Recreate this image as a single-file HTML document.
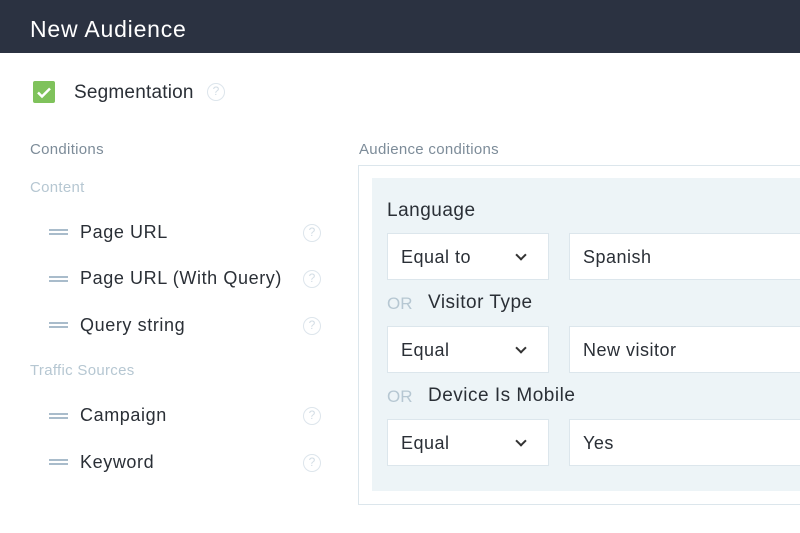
<!DOCTYPE html>
<html><head><style>
*{margin:0;padding:0;box-sizing:border-box}
body{width:800px;height:533px;overflow:hidden;background:#fff;font-family:"Liberation Sans",sans-serif;position:relative;color:#2a2f36}
.a{position:absolute;white-space:nowrap}
.hdr{left:0;top:0;width:800px;height:53px;background:#2b3241}
.q{position:absolute;width:18px;height:18px;border:1.5px solid #dde5ec;border-radius:50%;color:#d3dde5;font-size:12px;text-align:center;line-height:15px}
.dr{position:absolute;width:19px;height:6px;border-top:2px solid #a9bccb;border-bottom:2px solid #a9bccb}
.t{font-size:18px;letter-spacing:0.6px}
.box{position:absolute;background:#fff;border:1px solid #dce6ec;font-size:18px;letter-spacing:0.5px;padding-left:13px;line-height:46px;color:#2a2f36}
.chev{position:absolute;left:129px;top:17px;width:8px;height:8px;border-right:2.5px solid #333;border-bottom:2.5px solid #333;transform:rotate(45deg)}
</style></head><body>
<div class="a hdr"></div>
<div class="a" style="left:30px;top:16px;font-size:23px;color:#fff;letter-spacing:0.8px">New Audience</div>
<div class="a" style="left:33px;top:81px;width:22px;height:22px;background:#7fc25b;border-radius:2px"><svg width="22" height="22"><path d="M5 11.5l4 4 8-8" stroke="#fff" stroke-width="2.5" fill="none"/></svg></div>
<div class="a" style="left:74px;top:82px;font-size:19px;letter-spacing:0.2px">Segmentation</div>
<div class="q" style="left:207px;top:83px">?</div>
<div class="a" style="left:30px;top:141px;font-size:15px;color:#7d8c99;letter-spacing:0.3px">Conditions</div>
<div class="a" style="left:30px;top:179px;font-size:15px;color:#b6c7d2;letter-spacing:0.3px">Content</div>
<div class="dr" style="left:49px;top:229px"></div><div class="a t" style="left:80px;top:222px">Page URL</div><div class="q" style="left:303px;top:224px">?</div>
<div class="dr" style="left:49px;top:276px"></div><div class="a t" style="left:80px;top:268px">Page URL (With Query)</div><div class="q" style="left:303px;top:270px">?</div>
<div class="dr" style="left:49px;top:322px"></div><div class="a t" style="left:80px;top:315px">Query string</div><div class="q" style="left:303px;top:317px">?</div>
<div class="a" style="left:30px;top:362px;font-size:15px;color:#b6c7d2;letter-spacing:0.3px">Traffic Sources</div>
<div class="dr" style="left:49px;top:413px"></div><div class="a t" style="left:80px;top:405px">Campaign</div><div class="q" style="left:303px;top:407px">?</div>
<div class="dr" style="left:49px;top:459px"></div><div class="a t" style="left:80px;top:452px">Keyword</div><div class="q" style="left:303px;top:454px">?</div>
<div class="a" style="left:359px;top:141px;font-size:15px;color:#7d8c99;letter-spacing:0.3px">Audience conditions</div>
<div class="a" style="left:358px;top:165px;width:460px;height:340px;border:1.5px solid #dce6ec"></div>
<div class="a" style="left:372px;top:178px;width:440px;height:313px;background:#edf4f7"></div>
<div class="a" style="left:387px;top:200px;font-size:19px;letter-spacing:0.5px">Language</div>
<div class="box" style="left:387px;top:233px;width:162px;height:47px">Equal to<div class="chev"></div></div>
<div class="box" style="left:569px;top:233px;width:250px;height:47px">Spanish</div>
<div class="a" style="left:387px;top:294px;font-size:17px;color:#b6c7d2">OR</div><div class="a" style="left:428px;top:292px;font-size:19px;letter-spacing:0.5px">Visitor Type</div>
<div class="box" style="left:387px;top:326px;width:162px;height:47px">Equal<div class="chev"></div></div>
<div class="box" style="left:569px;top:326px;width:250px;height:47px">New visitor</div>
<div class="a" style="left:387px;top:387px;font-size:17px;color:#b6c7d2">OR</div><div class="a" style="left:428px;top:385px;font-size:19px;letter-spacing:0.5px">Device Is Mobile</div>
<div class="box" style="left:387px;top:419px;width:162px;height:47px">Equal<div class="chev"></div></div>
<div class="box" style="left:569px;top:419px;width:250px;height:47px">Yes</div>
</body></html>
